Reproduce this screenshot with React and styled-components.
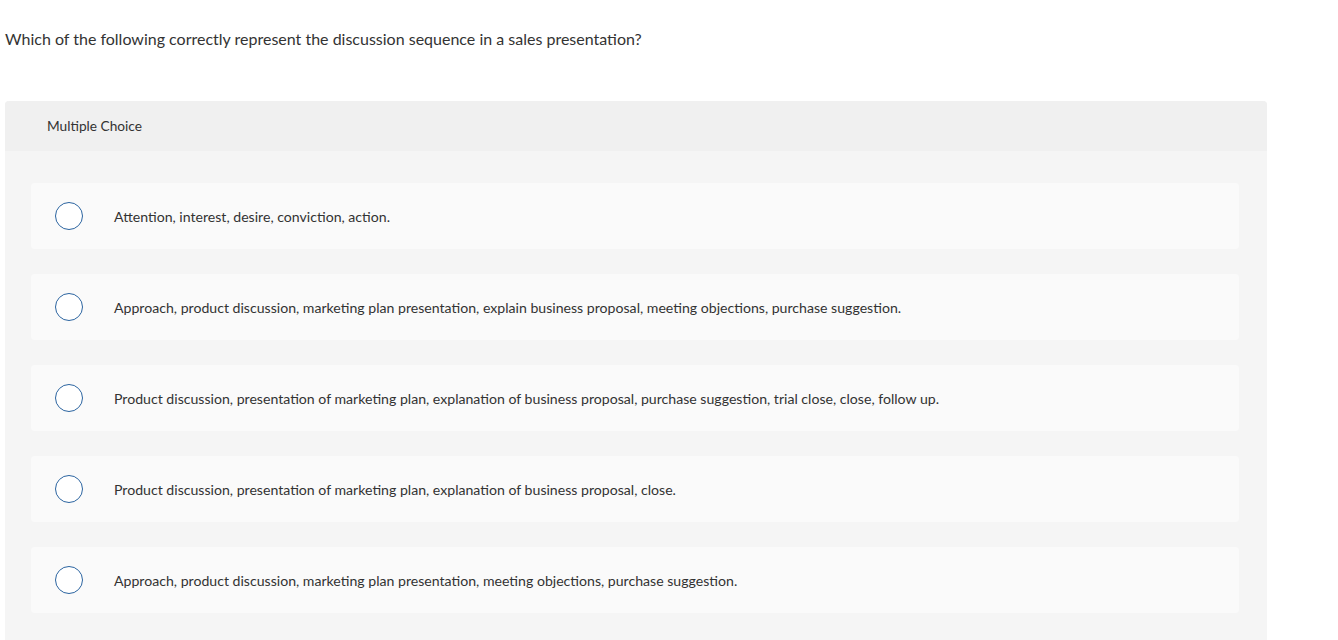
import React from "react";
import styled, { createGlobalStyle } from "styled-components";

const Global = createGlobalStyle`
  html, body { margin: 0; padding: 0; background: #fff; }
  body { font-family: "Lato", "Open Sans", sans-serif; color: #333; }
`;

const Page = styled.div`
  padding: 0 71px 0 5px;
`;

const Question = styled.p`
  margin: 0;
  padding-top: 29px;
  height: 101px;
  box-sizing: border-box;
  font-size: 16px;
  line-height: 20px;
  color: #333;
`;

const Panel = styled.section`
  border-radius: 4px 4px 0 0;
  background: #f5f5f5;
  overflow: hidden;
  padding-bottom: 40px;
`;

const Header = styled.div`
  background: #f0f0f0;
  height: 50px;
  box-sizing: border-box;
  display: flex;
  align-items: center;
  padding: 0 0 2px 42px;
  font-size: 13.7px;
  color: #333;
`;

const Options = styled.div`
  display: flex;
  flex-direction: column;
  gap: 25px;
  padding: 32px 28px 0 26px;
`;

const Option = styled.label`
  display: flex;
  align-items: center;
  height: 66px;
  background: #fafafa;
  border-radius: 4px;
  padding-left: 24px;
  font-size: 14.12px;
  color: #333;
  cursor: pointer;
`;

const Radio = styled.span`
  width: 26px;
  height: 26px;
  border: 1.5px solid #2b64a0;
  border-radius: 50%;
  background: #fff;
  flex: none;
  margin-right: 31px;
`;

const options = [
  "Attention, interest, desire, conviction, action.",
  "Approach, product discussion, marketing plan presentation, explain business proposal, meeting objections, purchase suggestion.",
  "Product discussion, presentation of marketing plan, explanation of business proposal, purchase suggestion, trial close, close, follow up.",
  "Product discussion, presentation of marketing plan, explanation of business proposal, close.",
  "Approach, product discussion, marketing plan presentation, meeting objections, purchase suggestion.",
];

export default function App() {
  return (
    <Page>
      <Global />
      <Question>
        Which of the following correctly represent the discussion sequence in a sales presentation?
      </Question>
      <Panel>
        <Header>Multiple Choice</Header>
        <Options>
          {options.map((o) => (
            <Option key={o}>
              <Radio />
              {o}
            </Option>
          ))}
        </Options>
      </Panel>
    </Page>
  );
}
